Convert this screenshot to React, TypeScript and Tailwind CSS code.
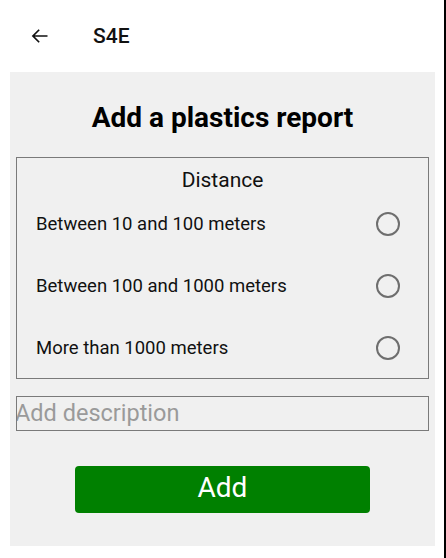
import { useState } from 'react';

const options = [
    'Between 10 and 100 meters',
    'Between 100 and 1000 meters',
    'More than 1000 meters',
];

export default function App() {
    const [selected, setSelected] = useState<number | null>(null);
    const [description, setDescription] = useState('');

    return (
        <div className="flex w-[446px] h-[558px] bg-white" style={{ fontFamily: 'Roboto, "Noto Sans", sans-serif' }}>
            <div className="flex flex-col flex-1">
                {/* Header */}
                <div className="flex items-center h-[72px] shrink-0">
                    <svg className="ml-[30px]" width="20" height="20" viewBox="0 0 24 24" fill="none" stroke="#111" strokeWidth="2">
                        <path d="M21 12H4M11 4.5L3.5 12L11 19.5" />
                    </svg>
                    <div className="ml-[43px] text-[21px] font-medium text-[#111] leading-none">S4E</div>
                </div>

                {/* Panel */}
                <div className="flex flex-col ml-[10px] mr-[9px] mb-[12px] flex-1 bg-[#f0f0f0] px-[6px]">
                    <div className="h-[85px] pt-[6px] flex items-center justify-center text-[28px] font-bold text-black">
                        Add a plastics report
                    </div>

                    <div className="border border-[#7a7a7a]">
                        <div className="pt-[10px] leading-[24px] text-[21px] text-center text-[#111]">Distance</div>
                        {options.map((label, i) => (
                            <div
                                key={label}
                                className="flex items-center justify-between h-[62px] pt-[2px] pl-[19px] pr-[28px] cursor-pointer"
                                onClick={() => setSelected(i)}
                            >
                                <span className="pt-[1px] text-[18.5px] text-[#111]">{label}</span>
                                <span className="w-[24px] h-[24px] rounded-full border-2 border-[#6e6e6e] flex items-center justify-center">
                                    {selected === i && <span className="w-[12px] h-[12px] rounded-full bg-[#008000]" />}
                                </span>
                            </div>
                        ))}
                    </div>

                    <input
                        className="mt-[17px] h-[35px] border border-[#7a7a7a] bg-transparent text-[23.5px] text-[#111] placeholder:text-[#9a9a9a] outline-none px-0 indent-[-2px]"
                        placeholder="Add description"
                        value={description}
                        onChange={(e) => setDescription(e.target.value)}
                    />

                    <button className="mt-[35px] mx-auto w-[295px] h-[47px] pb-[4px] rounded-[4px] bg-[#008000] text-white text-[28px] leading-none">
                        Add
                    </button>
                </div>
            </div>
            <div className="w-[2px] bg-black shrink-0" />
        </div>
    );
}
